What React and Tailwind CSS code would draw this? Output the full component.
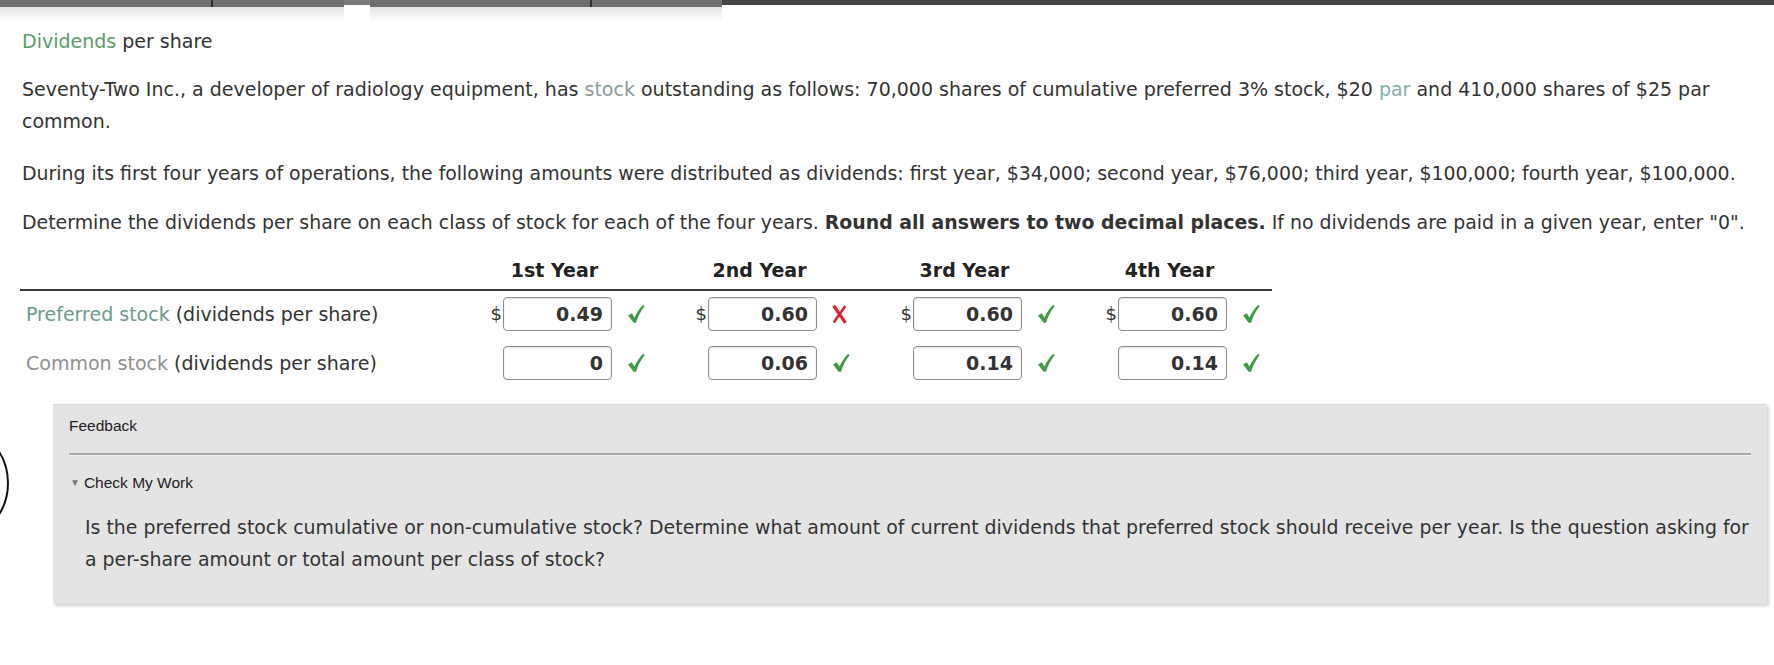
import React from "react";

const years = ["1st Year", "2nd Year", "3rd Year", "4th Year"];

const rows = [
  {
    term: "Preferred stock",
    termColor: "text-[#6f9a8e]",
    dollar: true,
    values: [
      { v: "0.49", ok: true },
      { v: "0.60", ok: false },
      { v: "0.60", ok: true },
      { v: "0.60", ok: true },
    ],
  },
  {
    term: "Common stock",
    termColor: "text-[#8f8f8f]",
    dollar: false,
    values: [
      { v: "0", ok: true },
      { v: "0.06", ok: true },
      { v: "0.14", ok: true },
      { v: "0.14", ok: true },
    ],
  },
];

const Check = () => (
  <svg width="18" height="20" viewBox="0 0 18 20">
    <path
      d="M1 11.4 L4.8 9.3 L7.4 13.6 C9.6 8.8 12.6 4.4 16.2 0.8 L17.6 2.2 C14 6.6 11 12.2 9.1 18.8 L6.6 18.8 Z"
      fill="#3f9c45"
    />
  </svg>
);

const Cross = () => (
  <svg width="15" height="20" viewBox="0 0 15 20">
    <path d="M2.5 3 L12.5 17.5" stroke="#d9262e" strokeWidth="3.2" strokeLinecap="square" />
    <path d="M12.5 3 L2.5 17.5" stroke="#d9262e" strokeWidth="2.6" strokeLinecap="square" />
  </svg>
);

const AnswerCell = ({ value, ok, dollar }) => (
  <div className="w-[205px] flex items-center">
    <span className="w-[51px] pr-[1px] text-right text-[18px] leading-none text-[#333]">
      {dollar ? "$" : ""}
    </span>
    <div className="w-[109px] h-[34px] border border-[#8c8c8c] rounded-[4px] bg-white shadow-[inset_0_1px_2px_rgba(0,0,0,0.12)] flex items-center justify-end pr-[8px] font-bold text-[19px] text-[#333]">
      {value}
    </div>
    <span className="ml-[15px] flex items-center">{ok ? <Check /> : <Cross />}</span>
  </div>
);

const TopStrip = () => (
  <div className="flex h-[22px]">
    <div className="w-[344px] flex flex-col">
      <div className="h-[7px] bg-[#6f6f6f] flex">
        <div className="w-[211px]" />
        <div className="w-[2px] bg-[#2f2f2f]" />
      </div>
      <div className="flex-1 bg-gradient-to-b from-[#e3e3e3] to-white" />
    </div>
    <div className="w-[26px] flex flex-col">
      <div className="h-[5px] bg-[#7a7a7a]" />
    </div>
    <div className="w-[352px] flex flex-col">
      <div className="h-[7px] bg-[#6f6f6f] flex">
        <div className="w-[220px]" />
        <div className="w-[2px] bg-[#2f2f2f]" />
      </div>
      <div className="flex-1 bg-gradient-to-b from-[#e3e3e3] to-white" />
    </div>
    <div className="flex-1">
      <div className="h-[5px] bg-[#454545]" />
    </div>
  </div>
);

export default function App() {
  return (
    <div
      className="relative w-[1774px] h-[665px] overflow-hidden bg-white text-[#333]"
      style={{ fontFamily: '"DejaVu Sans", Verdana, sans-serif' }}
    >
      <TopStrip />

      {/* partial circle at the left edge */}
      <div className="absolute left-[-111px] top-[423px] w-[120px] h-[120px] rounded-full border-2 border-[#111]" />

      <div className="pl-[22px] pr-[14px] text-[18.9px] leading-[32px]">
        <div className="mt-[3px] text-[19px]">
          <span className="text-[#5b9d6a]">Dividends</span> per share
        </div>
        <p className="mt-[16px] text-[19px]">
          Seventy-Two Inc., a developer of radiology equipment, has{" "}
          <span className="text-[#8a9a98]">stock</span> outstanding as follows: 70,000 shares of
          cumulative preferred 3% stock, $20 <span className="text-[#7fb0ab]">par</span> and
          410,000 shares of $25 par common.
        </p>
        <p className="mt-[20px]">
          During its first four years of operations, the following amounts were distributed as
          dividends: first year, $34,000; second year, $76,000; third year, $100,000; fourth year,
          $100,000.
        </p>
        <p className="mt-[17px]">
          Determine the dividends per share on each class of stock for each of the four years.{" "}
          <b>Round all answers to two decimal places.</b> If no dividends are paid in a given year,
          enter "0".
        </p>
      </div>

      <div className="ml-[20px] w-[1252px] mt-[20px]">
        <div className="flex border-b-2 border-[#3a3a3a] pb-[7px]">
          <div className="w-[432px]" />
          {years.map((y) => (
            <div key={y} className="w-[205px] text-center font-bold text-[19px] leading-[24px] text-[#222]">
              {y}
            </div>
          ))}
        </div>
        {rows.map((r, i) => (
          <div key={r.term} className={`flex items-center ${i === 0 ? "pt-[6px] pb-[8px]" : "pt-[7px]"}`}>
            <div className="w-[432px] pl-[6px] text-[19px]">
              <span className={r.termColor}>{r.term}</span> (dividends per share)
            </div>
            {r.values.map((c, j) => (
              <AnswerCell key={j} value={c.v} ok={c.ok} dollar={r.dollar} />
            ))}
          </div>
        ))}
      </div>

      <div className="ml-[53px] mr-[7px] mt-[24px] bg-[#e4e4e4] border-t border-[#d6d6d6] shadow-[2px_2px_3px_rgba(0,0,0,0.18)] pt-[11px] pb-[29px]">
        <div
          className="pl-[16px] text-[15.5px] leading-[20px] text-[#222]"
          style={{ fontFamily: '"Liberation Sans", Arial, sans-serif' }}
        >
          Feedback
        </div>
        <div className="mx-[16px] mt-[17px] h-[2px] bg-[#a9a9a9] border-b border-[#f2f2f2] box-content" />
        <div
          className="pl-[17px] mt-[17px] flex items-center text-[15.5px] leading-[20px] text-[#222]"
          style={{ fontFamily: '"Liberation Sans", Arial, sans-serif' }}
        >
          <span className="text-[10px] text-[#7a7a7a] mr-[4px]">▼</span>
          Check My Work
        </div>
        <p className="pl-[32px] pr-[10px] mt-[18px] text-[18.9px] leading-[32px] text-[#333]">
          Is the preferred stock cumulative or non-cumulative stock? Determine what amount of current
          dividends that preferred stock should receive per year. Is the question asking for a
          per-share amount or total amount per class of stock?
        </p>
      </div>
    </div>
  );
}
